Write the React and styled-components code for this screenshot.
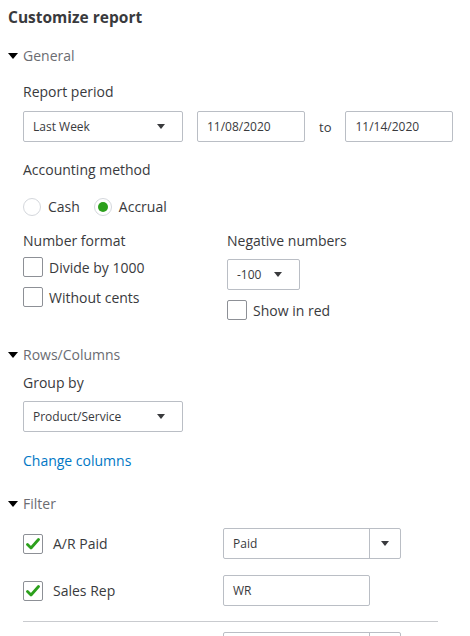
import React from "react";
import styled, { createGlobalStyle } from "styled-components";

const GlobalStyle = createGlobalStyle`
    body {
        margin: 0;
        background: #ffffff;
        font-family: "Open Sans", "Liberation Sans", sans-serif;
        color: #393a3d;
    }
`;

const Panel = styled.div`
    width: 470px;
    height: 636px;
    overflow: hidden;
    padding: 6px 8px 0 8px;
    box-sizing: border-box;
`;

const Title = styled.h2`
    margin: 0 0 18px 0;
    font-size: 15.5px;
    font-weight: 700;
    line-height: 22px;
    color: #393a3d;
`;

const SectionHead = styled.div`
    display: flex;
    align-items: center;
    gap: 5px;
    font-size: 14px;
    line-height: 20px;
    color: #6b6c72;
    margin-bottom: ${props => props.gap || 14}px;
`;

const Caret = styled.span`
    width: 0;
    height: 0;
    border-left: 5px solid transparent;
    border-right: 5px solid transparent;
    border-top: 6px solid #000;
`;

const Body = styled.div`
    padding-left: 15px;
`;

const Label = styled.div`
    font-size: 14px;
    line-height: 20px;
    color: #393a3d;
    margin-top: ${props => props.mt || 0}px;
    margin-bottom: ${props => props.mb || 0}px;
`;

const Row = styled.div`
    display: flex;
    align-items: center;
    gap: 14px;
`;

const Field = styled.div`
    display: flex;
    align-items: center;
    justify-content: space-between;
    box-sizing: border-box;
    width: ${props => props.w}px;
    height: 31px;
    padding: 0 ${props => (props.split ? 0 : 9)}px 0 9px;
    border: 1px solid #babec5;
    border-radius: 2px;
    background: #fff;
    font-size: 12px;
    color: #393a3d;
`;

const Arrow = styled.span`
    width: 0;
    height: 0;
    border-left: 4px solid transparent;
    border-right: 4px solid transparent;
    border-top: 5px solid #393a3d;
    margin-right: ${props => props.mr ?? 8}px;
`;

const SplitButton = styled.span`
    display: flex;
    align-items: center;
    justify-content: center;
    width: 30px;
    height: 100%;
    border-left: 1px solid #babec5;
`;

const ToText = styled.span`
    font-size: 13px;
    color: #393a3d;
`;

const Radios = styled.div`
    display: flex;
    align-items: center;
    gap: 14px;
    margin: 17px 0 15px;
`;

const RadioItem = styled.label`
    display: flex;
    align-items: center;
    gap: 7px;
    font-size: 14px;
`;

const RadioCircle = styled.span`
    display: flex;
    align-items: center;
    justify-content: center;
    width: 18px;
    height: 18px;
    border-radius: 50%;
    border: 1px solid #d4d7dc;
    box-sizing: border-box;

    &::after {
        content: "";
        width: 10px;
        height: 10px;
        border-radius: 50%;
        background: ${props => (props.$on ? "#2ca01c" : "transparent")};
    }
`;

const Columns = styled.div`
    display: grid;
    grid-template-columns: 204px 1fr;
    margin-bottom: 25px;
`;

const Column = styled.div`
    display: flex;
    flex-direction: column;
`;

const CheckItem = styled.label`
    display: flex;
    align-items: center;
    gap: ${props => props.gap || 6}px;
    font-size: 14px;
    height: 20px;
    margin-top: ${props => props.mt || 0}px;
`;

const Box = styled.span`
    display: flex;
    align-items: center;
    justify-content: center;
    width: 20px;
    height: 20px;
    box-sizing: border-box;
    border: 1px solid #8d9096;
    border-radius: 2px;
    background: #fff;
`;

const LinkText = styled.a`
    display: block;
    font-size: 14px;
    line-height: 20px;
    color: #0077c5;
    text-decoration: none;
    margin: 19px 0 23px;
`;

const FilterRow = styled.div`
    display: grid;
    grid-template-columns: 200px 1fr;
    align-items: center;
    margin-bottom: ${props => props.mb ?? 16}px;
`;

const Divider = styled.div`
    height: 1px;
    width: 415px;
    background: #c9cbcf;
    margin: 15px 0 10px;
`;

const Check = () => (
    <svg width="14" height="12" viewBox="0 0 14 12">
        <path d="M1.5 6.5 L5 10 L12.5 1.5" fill="none" stroke="#2ca01c" strokeWidth="2.8" strokeLinecap="round" strokeLinejoin="round" />
    </svg>
);

const Select = ({ w, children }) => (
    <Field w={w}>
        <span>{children}</span>
        <Arrow />
    </Field>
);

const SplitSelect = ({ w, children }) => (
    <Field w={w} split>
        <span>{children}</span>
        <SplitButton>
            <Arrow mr={0} />
        </SplitButton>
    </Field>
);

export default function App() {
    return (
        <>
            <GlobalStyle />
            <Panel>
                <Title>Customize report</Title>

                <SectionHead gap={16}>
                    <Caret />
                    General
                </SectionHead>
                <Body>
                    <Label mb={9}>Report period</Label>
                    <Row>
                        <Select w={160}>Last Week</Select>
                        <Field w={108}>11/08/2020</Field>
                        <ToText>to</ToText>
                        <Field w={108}>11/14/2020</Field>
                    </Row>

                    <Label mt={18}>Accounting method</Label>
                    <Radios>
                        <RadioItem>
                            <RadioCircle />
                            Cash
                        </RadioItem>
                        <RadioItem>
                            <RadioCircle $on />
                            Accrual
                        </RadioItem>
                    </Radios>

                    <Columns>
                        <Column>
                            <Label mb={6}>Number format</Label>
                            <CheckItem>
                                <Box />
                                Divide by 1000
                            </CheckItem>
                            <CheckItem mt={10}>
                                <Box />
                                Without cents
                            </CheckItem>
                        </Column>
                        <Column>
                            <Label mb={8}>Negative numbers</Label>
                            <Select w={73}>-100</Select>
                            <CheckItem mt={10}>
                                <Box />
                                Show in red
                            </CheckItem>
                        </Column>
                    </Columns>
                </Body>

                <SectionHead gap={8}>
                    <Caret />
                    Rows/Columns
                </SectionHead>
                <Body>
                    <Label mb={8}>Group by</Label>
                    <Select w={160}>Product/Service</Select>
                    <LinkText href="#">Change columns</LinkText>
                </Body>

                <SectionHead gap={14}>
                    <Caret />
                    Filter
                </SectionHead>
                <Body>
                    <FilterRow>
                        <CheckItem gap={10}>
                            <Box>
                                <Check />
                            </Box>
                            A/R Paid
                        </CheckItem>
                        <SplitSelect w={178}>Paid</SplitSelect>
                    </FilterRow>
                    <FilterRow mb={0}>
                        <CheckItem gap={10}>
                            <Box>
                                <Check />
                            </Box>
                            Sales Rep
                        </CheckItem>
                        <Field w={147}>WR</Field>
                    </FilterRow>
                    <Divider />
                    <FilterRow>
                        <span />
                        <SplitSelect w={178}></SplitSelect>
                    </FilterRow>
                </Body>
            </Panel>
        </>
    );
}
